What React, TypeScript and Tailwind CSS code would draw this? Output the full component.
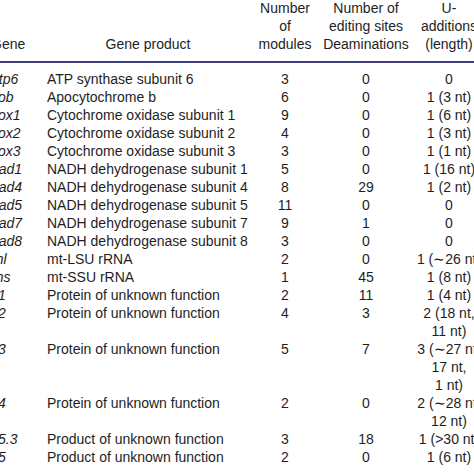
type Row = { gene: string; product: string; modules: string; deam: string; u: string[] };

const rows: Row[] = [
  { gene: "atp6", product: "ATP synthase subunit 6", modules: "3", deam: "0", u: ["0"] },
  { gene: "cob", product: "Apocytochrome b", modules: "6", deam: "0", u: ["1 (3 nt)"] },
  { gene: "cox1", product: "Cytochrome oxidase subunit 1", modules: "9", deam: "0", u: ["1 (6 nt)"] },
  { gene: "cox2", product: "Cytochrome oxidase subunit 2", modules: "4", deam: "0", u: ["1 (3 nt)"] },
  { gene: "cox3", product: "Cytochrome oxidase subunit 3", modules: "3", deam: "0", u: ["1 (1 nt)"] },
  { gene: "nad1", product: "NADH dehydrogenase subunit 1", modules: "5", deam: "0", u: ["1 (16 nt)"] },
  { gene: "nad4", product: "NADH dehydrogenase subunit 4", modules: "8", deam: "29", u: ["1 (2 nt)"] },
  { gene: "nad5", product: "NADH dehydrogenase subunit 5", modules: "11", deam: "0", u: ["0"] },
  { gene: "nad7", product: "NADH dehydrogenase subunit 7", modules: "9", deam: "1", u: ["0"] },
  { gene: "nad8", product: "NADH dehydrogenase subunit 8", modules: "3", deam: "0", u: ["0"] },
  { gene: "rnl", product: "mt-LSU rRNA", modules: "2", deam: "0", u: ["1 (\u223C26 nt)"] },
  { gene: "rns", product: "mt-SSU rRNA", modules: "1", deam: "45", u: ["1 (8 nt)"] },
  { gene: "y1", product: "Protein of unknown function", modules: "2", deam: "11", u: ["1 (4 nt)"] },
  { gene: "y2", product: "Protein of unknown function", modules: "4", deam: "3", u: ["2 (18 nt,", "11 nt)"] },
  { gene: "y3", product: "Protein of unknown function", modules: "5", deam: "7", u: ["3 (\u223C27 nt,", "17 nt,", "1 nt)"] },
  { gene: "y4", product: "Protein of unknown function", modules: "2", deam: "0", u: ["2 (\u223C28 nt,", "12 nt)"] },
  { gene: "y5.3", product: "Product of unknown function", modules: "3", deam: "18", u: ["1 (>30 nt)"] },
  { gene: "y5", product: "Product of unknown function", modules: "2", deam: "0", u: ["1 (6 nt)"] },
];

const cols = "grid grid-cols-[56px_202px_72px_90px_76px]";

export default function App() {
  return (
    <div
      className="w-[474px] h-[474px] overflow-hidden bg-white text-[#1e1e1e] text-[14px] leading-[18px]"
      style={{ fontFamily: '"Liberation Sans", Arial, sans-serif' }}
    >
      <div className="ml-[-9px] w-[496px] mt-[-1px]">
        <div className={`${cols} pb-[8px]`}>
          <div className="self-end">Gene</div>
          <div className="self-end text-center">Gene product</div>
          <div className="text-center">
            Number
            <br />
            of
            <br />
            modules
          </div>
          <div className="text-center">
            Number of
            <br />
            editing sites
            <br />
            Deaminations
          </div>
          <div className="text-center">
            U-
            <br />
            additions
            <br />
            (length)
          </div>
        </div>
        <div className="h-[2px] bg-[#3c3c80]" />
        <div className="pt-[7px]">
          {rows.map((r) => (
            <div key={r.gene} className={cols}>
              <div className="italic">{r.gene}</div>
              <div>{r.product}</div>
              <div className="text-center">{r.modules}</div>
              <div className="text-center">{r.deam}</div>
              <div className="text-center whitespace-nowrap">
                {r.u.map((line, i) => (
                  <div key={i}>{line}</div>
                ))}
              </div>
            </div>
          ))}
        </div>
      </div>
    </div>
  );
}
